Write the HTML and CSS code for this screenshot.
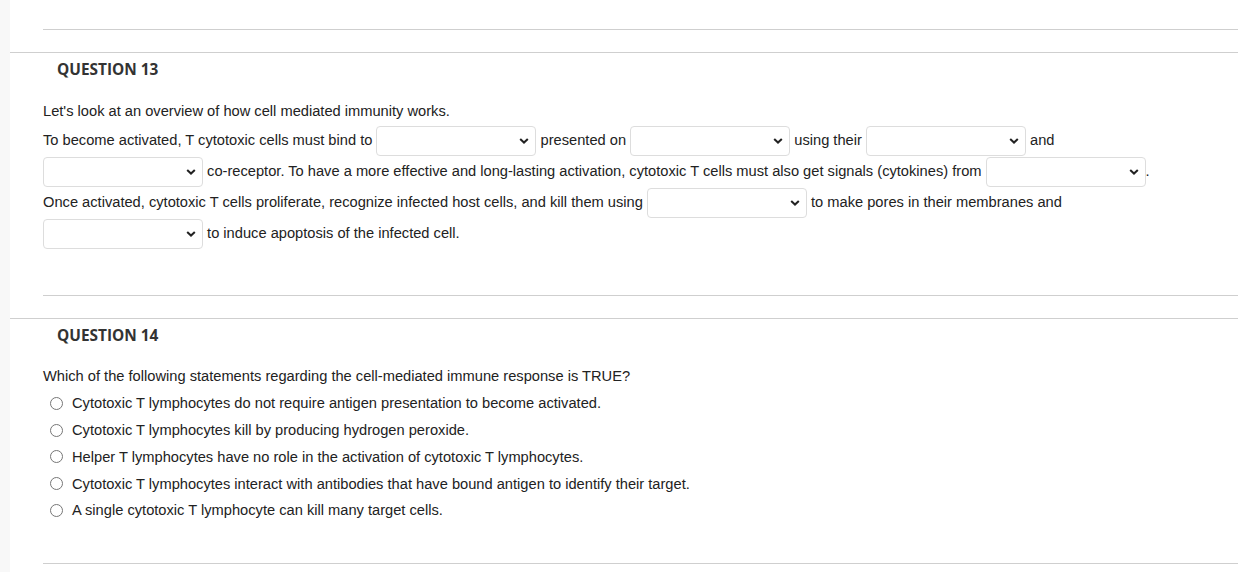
FILE: index.html
```html
<!DOCTYPE html>
<html>
<head>
<meta charset="utf-8">
<link rel="stylesheet" href="styles.css">
</head>
<body>
<div class="strip"></div>
<main class="main">
  <div class="rule rule-short rule-top"></div>
  <div class="rule rule-full"></div>
  <section class="question">
    <h2 class="q-title">QUESTION 13</h2>
    <p class="q-intro">Let's look at an overview of how cell mediated immunity works.</p>
    <p class="q-body">To become activated, T cytotoxic cells must bind to <span class="sel"><select></select><svg class="chev" viewBox="0 0 10 6" width="10" height="6"><path d="M1.2 1 L5 4.6 L8.8 1" fill="none" stroke="#222" stroke-width="2"/></svg></span> presented on <span class="sel"><select></select><svg class="chev" viewBox="0 0 10 6" width="10" height="6"><path d="M1.2 1 L5 4.6 L8.8 1" fill="none" stroke="#222" stroke-width="2"/></svg></span> using their <span class="sel"><select></select><svg class="chev" viewBox="0 0 10 6" width="10" height="6"><path d="M1.2 1 L5 4.6 L8.8 1" fill="none" stroke="#222" stroke-width="2"/></svg></span> and<br><span class="sel"><select></select><svg class="chev" viewBox="0 0 10 6" width="10" height="6"><path d="M1.2 1 L5 4.6 L8.8 1" fill="none" stroke="#222" stroke-width="2"/></svg></span> co-receptor. To have a more effective and long-lasting activation, cytotoxic T cells must also get signals (cytokines) from <span class="sel"><select></select><svg class="chev" viewBox="0 0 10 6" width="10" height="6"><path d="M1.2 1 L5 4.6 L8.8 1" fill="none" stroke="#222" stroke-width="2"/></svg></span>.<br>Once activated, cytotoxic T cells proliferate, recognize infected host cells, and kill them using <span class="sel"><select></select><svg class="chev" viewBox="0 0 10 6" width="10" height="6"><path d="M1.2 1 L5 4.6 L8.8 1" fill="none" stroke="#222" stroke-width="2"/></svg></span> to make pores in their membranes and<br><span class="sel"><select></select><svg class="chev" viewBox="0 0 10 6" width="10" height="6"><path d="M1.2 1 L5 4.6 L8.8 1" fill="none" stroke="#222" stroke-width="2"/></svg></span> to induce apoptosis of the infected cell.</p>
  </section>
  <div class="rule rule-short rule-mid"></div>
  <div class="rule rule-full"></div>
  <section class="question">
    <h2 class="q-title">QUESTION 14</h2>
    <p class="q-intro q-intro-2">Which of the following statements regarding the cell-mediated immune response is TRUE?</p>
    <ul class="options">
      <li class="opt"><input type="radio" name="q14"><span>Cytotoxic T lymphocytes do not require antigen presentation to become activated.</span></li>
      <li class="opt"><input type="radio" name="q14"><span>Cytotoxic T lymphocytes kill by producing hydrogen peroxide.</span></li>
      <li class="opt"><input type="radio" name="q14"><span>Helper T lymphocytes have no role in the activation of cytotoxic T lymphocytes.</span></li>
      <li class="opt"><input type="radio" name="q14"><span>Cytotoxic T lymphocytes interact with antibodies that have bound antigen to identify their target.</span></li>
      <li class="opt"><input type="radio" name="q14"><span>A single cytotoxic T lymphocyte can kill many target cells.</span></li>
    </ul>
  </section>
  <div class="rule rule-short rule-bottom"></div>
</main>
</body>
</html>
```
FILE: styles.css
```css
html, body {
  margin: 0;
  padding: 0;
  background: #ffffff;
}
body {
  display: flex;
  min-height: 572px;
  font-family: "Liberation Sans", Arial, sans-serif;
  font-size: 14.67px;
  color: #222222;
}
.strip {
  width: 10px;
  flex: none;
  background: #f8f8f8;
}
.main {
  flex: 1;
  min-width: 0;
}
.rule {
  height: 1px;
  background: #cfcfcf;
}
.rule-short {
  margin-left: 33px;
}
.rule-top {
  margin-top: 29px;
  margin-bottom: 22px;
}
.rule-mid {
  margin-top: 46px;
  margin-bottom: 22px;
}
.rule-bottom {
  margin-top: 39px;
}
.question {
  padding-left: 33px;
}
.q-title {
  margin: 0;
  padding-left: 14px;
  padding-top: 7px;
  font-family: "Open Sans", sans-serif;
  font-weight: 700;
  font-size: 15.4px;
  line-height: 20px;
  color: #333333;
}
.q-intro {
  margin: 21px 0 0 0;
  line-height: 20px;
}
.q-intro-2 {
  margin-top: 20px;
}
.q-body {
  margin: 4px 0 0 0;
  line-height: 31px;
  white-space: nowrap;
}
.sel {
  position: relative;
  display: inline-block;
  vertical-align: middle;
  width: 160px;
  height: 30px;
  margin-top: -1px;
}
.sel select {
  appearance: none;
  -webkit-appearance: none;
  display: block;
  width: 160px;
  height: 30px;
  box-sizing: border-box;
  margin: 0;
  border: 1px solid #dddddd;
  border-radius: 4px;
  background: #ffffff;
}
.chev {
  position: absolute;
  right: 7px;
  top: 12px;
}
.options {
  list-style: none;
  margin: 4px 0 0 0;
  padding: 0;
}
.opt {
  display: flex;
  align-items: center;
  height: 26.75px;
}
.opt input {
  margin: 0 9px 0 7px;
  width: 13px;
  height: 13px;
}
```
